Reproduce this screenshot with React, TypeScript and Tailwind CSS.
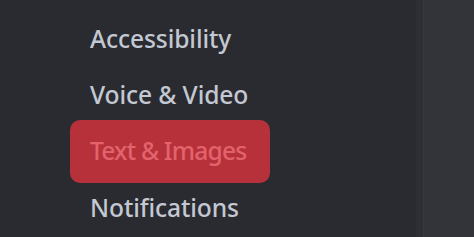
import React from 'react';

const items = ['Accessibility', 'Voice & Video', 'Text & Images', 'Notifications'];

export default function App() {
  const active = 'Text & Images';
  return (
    <div className="flex h-[237px] w-[474px] overflow-hidden bg-[#2a2b30] font-['Noto_Sans',sans-serif]">
      <nav className="flex w-[416px] flex-col pl-[70px] pt-[11px]">
        {items.map((item) => (
          <div
            key={item}
            className={
              item === active
                ? 'my-[-3px] flex h-[63px] w-[200px] items-center rounded-[10px] bg-[#b7313a] px-5 text-[#e2636b] tracking-[-0.8px]'
                : 'flex h-[56px] w-[200px] items-center px-5 text-[#c3c8d2] tracking-[-0.1px]'
            }
          >
            <span className="whitespace-nowrap text-[24.6px] font-medium leading-none">{item}</span>
          </div>
        ))}
      </nav>
      <div className="w-[7px] bg-[#2e2f34]" />
      <div className="w-px bg-[#37383d]" />
      <div className="flex-1 bg-[#333439]" />
    </div>
  );
}
